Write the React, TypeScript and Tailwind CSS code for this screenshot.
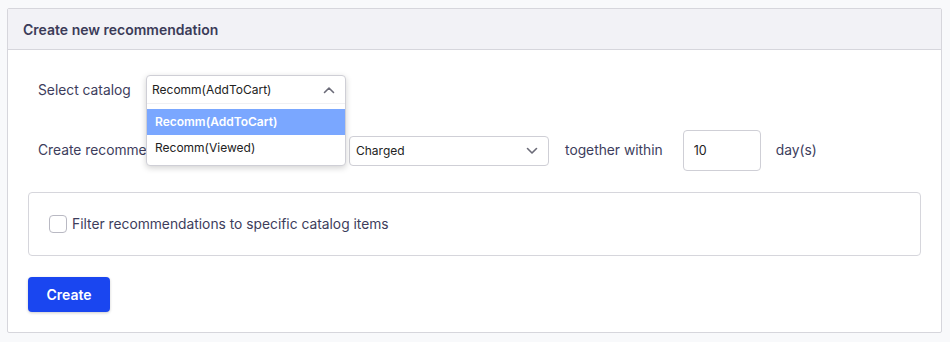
import { useState } from 'react';

const catalogs = ['Recomm(AddToCart)', 'Recomm(Viewed)'];

function ChevronIcon({ up }: { up?: boolean }) {
    return (
        <svg width="12" height="8" viewBox="0 0 12 8" className="text-[#6b6b78]">
            <path
                d={up ? 'M1.5 6.5 L6 2 L10.5 6.5' : 'M1.5 1.5 L6 6 L10.5 1.5'}
                fill="none"
                stroke="currentColor"
                strokeWidth="1.6"
                strokeLinecap="round"
                strokeLinejoin="round"
            />
        </svg>
    );
}

export default function App() {
    const [catalog, setCatalog] = useState(catalogs[0]);
    const [days, setDays] = useState('10');
    const [filter, setFilter] = useState(false);

    return (
        <div className="min-h-[342px] bg-[#f8f9fb] pt-2 pl-[7px] pr-[9px] font-['Inter',sans-serif] text-[#3d3d5c]">
            <div className="w-[935px] border border-[#d6d6dc] rounded-[2px] bg-white">
                {/* header */}
                <div className="h-[41px] bg-[#f2f2f6] border-b border-[#d6d6dc] flex items-center px-[15px]">
                    <h2 className="text-[14px] font-semibold text-[#3b3b58]">Create new recommendation</h2>
                </div>

                <div className="px-5 pt-[25px] pb-[20px]">
                    {/* Select catalog */}
                    <div className="flex items-center h-[30px] pl-[10px]">
                        <span className="w-[108px] text-[13.8px]">Select catalog</span>
                        <div className="relative w-[200px] h-[30px]">
                            <div className="absolute top-0 left-0 w-full z-10 bg-white border border-[#cfcfd6] rounded-[4px] shadow-[0_2px_6px_rgba(0,0,0,0.18)]">
                                <div className="h-[28px] flex items-center justify-between pl-[5px] pr-[10px] border-b border-[#f0f0f3]">
                                    <span className="text-[12px] text-[#222]">{catalog}</span>
                                    <ChevronIcon up />
                                </div>
                                <ul className="pt-[5px] pb-[4px]">
                                    {catalogs.map((c) => (
                                        <li
                                            key={c}
                                            onClick={() => setCatalog(c)}
                                            className={
                                                c === catalog
                                                    ? 'h-[26px] flex items-center pl-[8px] text-[12px] font-semibold text-white bg-[#7aa7ff] cursor-pointer'
                                                    : 'h-[26px] flex items-center pl-[8px] text-[12px] text-[#222] cursor-pointer'
                                            }
                                        >
                                            {c}
                                        </li>
                                    ))}
                                </ul>
                            </div>
                        </div>
                    </div>

                    {/* Create recommendations row */}
                    <div className="flex items-center h-[41px] mt-[25px] pl-[10px]">
                        <span className="w-[311px] text-[13.8px] whitespace-nowrap overflow-hidden">
                            Create recommendations for items
                        </span>
                        <div className="w-[200px] h-[30px] flex items-center justify-between pl-[6px] pr-[10px] border border-[#cfcfd6] rounded-[4px] bg-white">
                            <span className="text-[12px] text-[#222]">Charged</span>
                            <ChevronIcon />
                        </div>
                        <span className="ml-[16px] text-[13.8px]">together within</span>
                        <input
                            value={days}
                            onChange={(e) => setDays(e.target.value)}
                            className="ml-[20px] w-[78px] h-[41px] border border-[#cfcfd6] rounded-[4px] px-[10px] text-[12.5px] text-[#222] outline-none"
                        />
                        <span className="ml-[15px] text-[13.8px]">day(s)</span>
                    </div>

                    {/* filter box */}
                    <div className="mt-[21px] h-[64px] border border-[#d6d6dc] rounded-[4px] flex items-center pl-[20px]">
                        <label className="flex items-center gap-[5px] cursor-pointer">
                            <input
                                type="checkbox"
                                checked={filter}
                                onChange={() => setFilter(!filter)}
                                className="appearance-none w-[18px] h-[18px] border border-[#b9b9c3] rounded-[4px] bg-white checked:bg-[#1a46f0]"
                            />
                            <span className="text-[13.8px]">Filter recommendations to specific catalog items</span>
                        </label>
                    </div>

                    <button className="mt-[21px] w-[82px] h-[35px] rounded-[4px] bg-[#1a46f0] text-white text-[14px] font-semibold shadow-[0_1px_3px_rgba(0,0,0,0.2)]">
                        Create
                    </button>
                </div>
            </div>
        </div>
    );
}
